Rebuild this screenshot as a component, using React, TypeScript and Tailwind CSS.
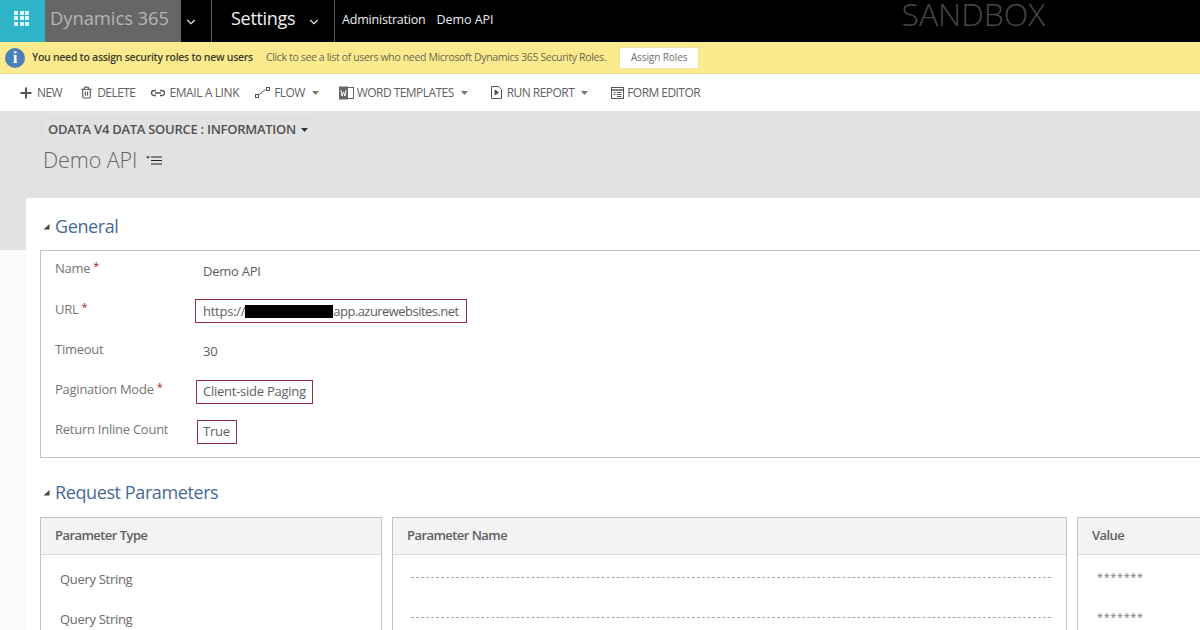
import React from "react";
import { ChevronDown, Plus, Trash2 } from "lucide-react";

function Caret({ className = "" }: { className?: string }) {
  return (
    <svg width="7" height="4" viewBox="0 0 7 4" className={className}>
      <path d="M0 0h7L3.5 4z" fill="currentColor" />
    </svg>
  );
}

function Corner() {
  return (
    <svg width="7" height="7" viewBox="0 0 7 7" className="text-[#444]">
      <path d="M6.5 1v5.5H0.5z" fill="currentColor" />
    </svg>
  );
}

function Cmd({ icon, label, caret, className = "", track = "tracking-[-0.55px]" }: { icon: React.ReactNode; label: string; caret?: boolean; className?: string; track?: string }) {
  return (
    <div className={`flex items-center whitespace-nowrap ${className}`}>
      {icon}
      <span className={`-translate-y-[0.5px] text-[12px] text-[#5f5f5f] ${track}`}>{label}</span>
      {caret && <Caret className="ml-[7px] text-[#777]" />}
    </div>
  );
}

function Field({ label, req, value, boxed, w, nudge = "" }: { label: string; req?: boolean; value: React.ReactNode; boxed?: boolean; w?: string; nudge?: string }) {
  return (
    <div className="flex h-[40.25px] items-center">
      <div className="w-[154px] shrink-0 -translate-y-[2px] pl-[14px] text-[13px] tracking-[-0.25px] text-[#757575] whitespace-nowrap">
        {label}
        {req && <span className="relative -top-[3px] ml-[3px] text-[11px] text-[#a4262c]">*</span>}
      </div>
      <div className={`flex h-[24px] items-center text-[13px] tracking-[-0.25px] text-[#5e5e5e] whitespace-nowrap ${nudge} ${boxed ? `border border-[#97303e] ${w}` : "pl-[8px]"}`}>
        {value}
      </div>
    </div>
  );
}

function Col({ title, className, children }: { title: string; className: string; children: React.ReactNode }) {
  return (
    <div className={`h-[140px] shrink-0 border border-[#c4c4c4] bg-white ${className}`}>
      <div className="flex h-[37px] items-center border-b border-[#dcdcdc] bg-[#f3f3f3] pl-[14px] text-[13px] font-semibold tracking-[-0.55px] text-[#606060]">
        {title}
      </div>
      {children}
    </div>
  );
}

function Section({ title }: { title: string }) {
  return (
    <div className="flex h-[24px] items-center pl-[17px]">
      <Corner />
      <span className="ml-[5px] text-[18px] tracking-[-0.4px] text-[#466a98]">{title}</span>
    </div>
  );
}

export default function App() {
  return (
    <div className="h-[630px] w-[1200px] overflow-hidden bg-white font-['Open_Sans',sans-serif]">
      <header className="flex h-[42px] items-center bg-black text-white">
        <div className="flex h-full w-[45px] items-center justify-center bg-[#2eb4c6] pr-[2px] pb-[6px]">
          <div className="grid grid-cols-3 gap-[1.5px]">
            {Array.from({ length: 9 }).map((_, i) => (
              <span key={i} className="h-[4px] w-[4px] bg-[#d8f4f7]" />
            ))}
          </div>
        </div>
        <div className="flex h-full w-[136px] items-center bg-[#666666] pb-[6px] pl-[5px] text-[18.4px] tracking-[-0.05px] text-[#b5b5b5]">Dynamics 365</div>
        <div className="flex h-full w-[31px] items-center border-r border-[#555] pl-[3px] pt-[1px]">
          <ChevronDown size={14} strokeWidth={2} className="text-[#ddd]" />
        </div>
        <div className="flex h-full w-[123px] items-center border-r border-[#555] pl-[19px]">
          <span className="-translate-y-[3px] text-[18px] tracking-[-0.3px] text-[#f2f2f2]">Settings</span>
          <ChevronDown size={14} strokeWidth={2} className="ml-[12px] translate-y-[1px] text-[#ddd]" />
        </div>
        <span className="ml-[7px] -translate-y-[1px] text-[12.5px] tracking-[-0.2px] text-[#eee]">Administration</span>
        <span className="ml-[11px] -translate-y-[1px] text-[12.5px] tracking-[-0.05px] text-[#eee]">Demo API</span>
        <span className="ml-[408px] -translate-y-[7px] text-[32px] font-light leading-[24px] tracking-[-0.05px] text-[#484848]">SANDBOX</span>
      </header>

      <div className="flex h-[32px] items-center border-b border-[#e6dc96] bg-[#fbeb8e]">
        <div className="ml-[5px] flex h-[20px] w-[20px] items-center justify-center rounded-full bg-[#4a7fb8] font-['Liberation_Serif',serif] text-[17px] font-bold text-white">i</div>
        <span className="ml-[7px] text-[10.5px] font-semibold tracking-[-0.27px] text-[#3c3c2c]">You need to assign security roles to new users</span>
        <span className="ml-[13px] text-[10.5px] tracking-[-0.35px] text-[#6b6750]">Click to see a list of users who need Microsoft Dynamics 365 Security Roles.</span>
        <div className="ml-[13px] flex h-[22px] w-[80px] items-center justify-center border border-[#eee3a8] bg-white text-[10px] tracking-[-0.1px] text-[#707070]">Assign Roles</div>
      </div>

      <div className="flex h-[37px] items-center bg-white">
        <Cmd className="ml-[19px]" icon={<Plus size={16} strokeWidth={3} className="mr-[3px] -ml-[1px] text-[#555]" />} label="NEW" />
        <Cmd className="ml-[18px]" icon={<Trash2 size={13} strokeWidth={2} className="mr-[4px] text-[#555]" />} label="DELETE" />
        <Cmd
          className="ml-[16px]"
          track="tracking-[-0.4px]"
          icon={
            <svg width="14" height="8" viewBox="0 0 14 8" fill="none" stroke="#555" strokeWidth="1.4" className="mr-[4px]">
              <path d="M5 1.5H3a2.5 2.5 0 0 0 0 5h2M9 1.5h2a2.5 2.5 0 0 1 0 5H9M4 4h6" />
            </svg>
          }
          label="EMAIL A LINK"
        />
        <Cmd
          className="ml-[16px]"
          caret
          icon={
            <svg width="15" height="11" viewBox="0 0 15 11" fill="none" stroke="#555" strokeWidth="1" className="mr-[4px]">
              <rect x="0.5" y="7.5" width="3" height="3" />
              <rect x="11.5" y="0.5" width="3" height="3" />
              <path d="M3.5 8L10.5 2.5" />
            </svg>
          }
          label="FLOW"
        />
        <Cmd
          className="ml-[20px]"
          caret
          icon={
            <svg width="15" height="14" viewBox="0 0 15 14" className="mr-[3px]">
              <rect x="5" y="1.5" width="9.5" height="11" fill="#fff" stroke="#666" />
              <rect x="0" y="0.5" width="9" height="13" fill="#666" />
              <path d="M2 4l1 6 1.5-4L6 10l1-6" stroke="#fff" strokeWidth="1" fill="none" />
            </svg>
          }
          label="WORD TEMPLATES"
        />
        <Cmd
          className="ml-[23px]"
          caret
          icon={
            <svg width="11" height="13" viewBox="0 0 11 13" fill="none" stroke="#555" className="mr-[5px]">
              <path d="M0.5 0.5h7l3 3v9h-10z" />
              <path d="M4 4l3.5 2.5L4 9z" fill="#555" />
            </svg>
          }
          label="RUN REPORT"
        />
        <Cmd
          className="ml-[23px]"
          icon={
            <svg width="13" height="12" viewBox="0 0 13 12" fill="none" stroke="#555" className="mr-[3px]">
              <rect x="0.5" y="0.5" width="12" height="11" />
              <path d="M0.5 3h12" strokeWidth="1.5" />
              <path d="M2.5 5.5h2M6 5.5h4.5M2.5 7.5h2M6 7.5h4.5M6 9.5h4.5" />
            </svg>
          }
          label="FORM EDITOR"
        />
      </div>

      <div className="h-[87px] bg-[#e2e2e2] pl-[41px] pt-[8px]">
        <div className="flex h-[23px] w-[274px] items-center border border-[#dcdcdc] pb-[1px] pl-[6px] text-[13px] font-semibold tracking-[-0.27px] text-[#505050]">
          ODATA V4 DATA SOURCE : INFORMATION
          <Caret className="ml-[5px] text-[#333]" />
        </div>
        <div className="mt-[3px] flex h-[31px] items-center pl-[2px]">
          <span className="text-[21.5px] font-light tracking-[-0.1px] text-[#666]">Demo API</span>
          <svg width="17" height="11" viewBox="0 0 17 11" className="ml-[9px] text-[#222]">
            <path d="M0 1.5h4L2 3.5z" fill="currentColor" />
            <path d="M5 2h11M5 5.5h11M5 9h11" stroke="currentColor" strokeWidth="1.2" />
          </svg>
        </div>
      </div>

      <div className="flex">
        <div className="h-[432px] w-[26px] shrink-0 bg-[#fbfbfb]">
          <div className="h-[52px] bg-[#e2e2e2]" />
        </div>
        <main className="flex-1 bg-white pt-[16px]">
          <Section title="General" />
          <div className="ml-[14px] mt-[12px] h-[208px] border border-r-0 border-[#c4c4c4]">
            <Field label="Name" req value="Demo API" nudge="translate-y-[1px]" />
            <Field
              label="URL"
              req
              boxed
              w="w-[272px] pl-[7px]"
              value={
                <>
                  https://
                  <span className="h-[13px] w-[88px] bg-black" />
                  <span className="tracking-[-0.55px]">app.azurewebsites.net</span>
                </>
              }
            />
            <Field label="Timeout" value="30" />
            <Field label="Pagination Mode" req boxed w="ml-[1px] w-[117px] pl-[6px] tracking-[-0.15px]" value="Client-side Paging" />
            <Field label="Return Inline Count" boxed w="ml-[2px] w-[40px] pl-[5px]" value="True" />
          </div>

          <div className="mt-[22px]"><Section title="Request Parameters" /></div>

          <div className="ml-[14px] mt-[13px] flex gap-[10px]">
            <Col title="Parameter Type" className="w-[342px]">
              <div className="pl-[19px] text-[13px] tracking-[-0.3px] text-[#6a6a6a]">
                <div className="flex h-[40px] items-center pt-[9px]">Query String</div>
                <div className="flex h-[40px] items-center pt-[9px]">Query String</div>
              </div>
            </Col>
            <Col title="Parameter Name" className="w-[675px]">
              <div className="ml-[18px] mr-[15px]">
                <div className="mt-[22px] border-t border-dashed border-[#a8a8a8]" />
                <div className="mt-[39px] border-t border-dashed border-[#a8a8a8]" />
              </div>
            </Col>
            <Col title="Value" className="w-[200px]">
              <div className="pl-[19px] text-[11px] tracking-[0.6px] text-[#777]">
                <div className="flex h-[40px] items-center pt-[5px]">*******</div>
                <div className="flex h-[40px] items-center pt-[5px]">*******</div>
              </div>
            </Col>
          </div>
        </main>
      </div>
    </div>
  );
}
